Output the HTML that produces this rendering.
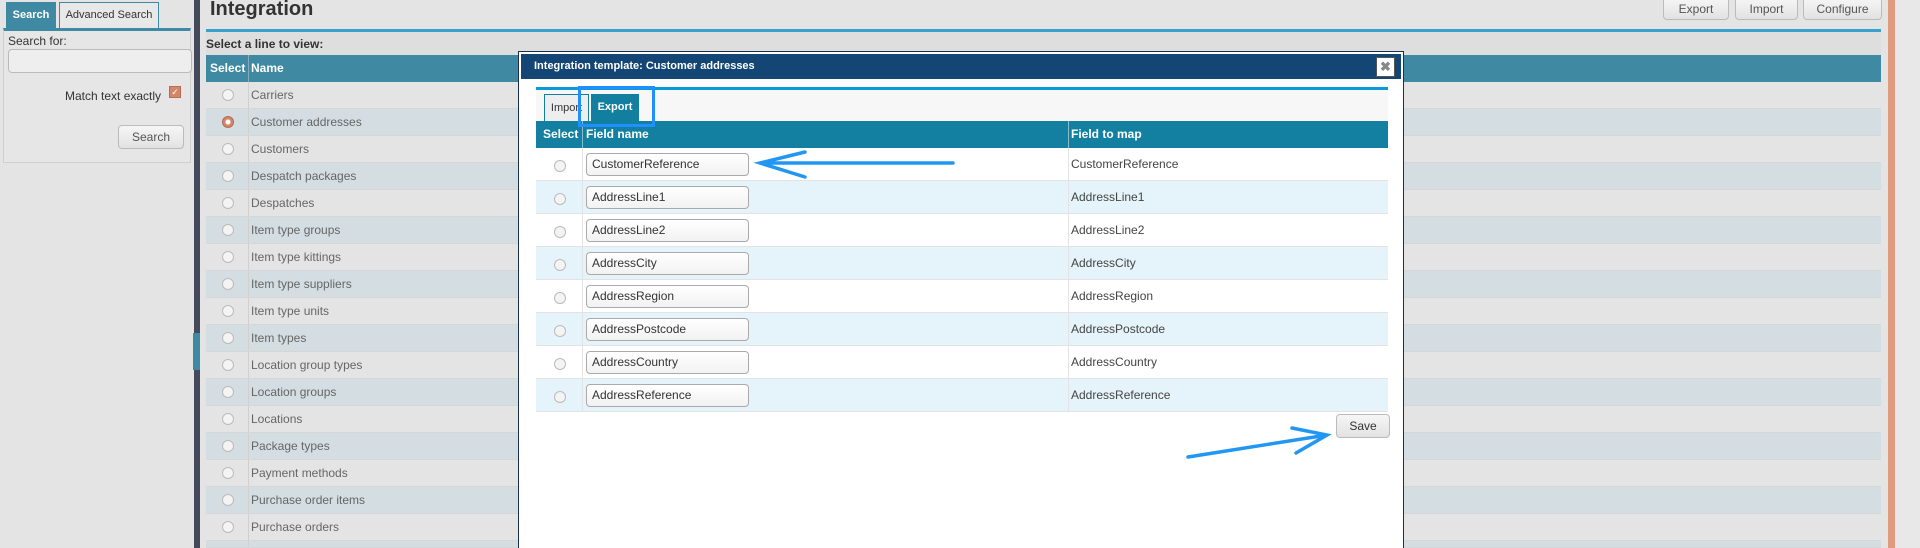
<!DOCTYPE html>
<html style="overflow:hidden;height:548px"><head><meta charset="utf-8"><style>
*{box-sizing:border-box;margin:0;padding:0}
body{width:1920px;height:548px;overflow:hidden;background:#e4e4e4;font-family:"Liberation Sans",sans-serif;font-size:12px;color:#555;position:relative}
.a{position:absolute}
.btn{position:absolute;border:1px solid #bbb;border-radius:4px;background:linear-gradient(#f6f6f6,#e2e2e2);color:#555;font-size:12px;text-align:center}
.radio{position:absolute;width:12px;height:12px;border:1px solid #bbb;border-radius:50%;background:#f4f4f4}
</style></head><body>
<div class="a" style="left:6px;top:2px;width:50px;height:27px;background:#3f8aa2;color:#fff;font-weight:bold;font-size:11px;line-height:27px;text-align:center">Search</div>
<div class="a" style="left:59px;top:2px;width:100px;height:27px;background:#e8e8e8;border:1px solid #3f8aa2;border-bottom:none;color:#333;font-size:11px;line-height:25px;text-align:center">Advanced Search</div>
<div class="a" style="left:3px;top:28px;width:188px;height:135px;border:1px solid #d0d0d0;border-top:3px solid #3f8aa2;background:#e6e6e6"></div>
<div class="a" style="left:8px;top:34px;color:#333;font-size:12px">Search for:</div>
<div class="a" style="left:8px;top:49px;width:184px;height:24px;border:1px solid #bbb;border-radius:4px;background:#eee"></div>
<div class="a" style="left:65px;top:89px;color:#333;font-size:12px">Match text exactly</div>
<div class="a" style="left:169px;top:86px;width:12px;height:12px;background:#d0876a;border:1px solid #b86c52;color:#fff;font-size:9px;line-height:10px;text-align:center">✓</div>
<div class="btn" style="left:118px;top:125px;width:66px;height:24px;line-height:22px">Search</div>
<div class="a" style="left:194px;top:0;width:6px;height:548px;background:#444a5c"></div>
<div class="a" style="left:193px;top:333px;width:7px;height:37px;background:#3f8aa2"></div>
<div class="a" style="left:210px;top:-2px;font-size:20px;font-weight:bold;color:#333">Integration</div>
<div class="btn" style="left:1663px;top:-3px;width:66px;height:23px;line-height:22px">Export</div>
<div class="btn" style="left:1735px;top:-3px;width:63px;height:23px;line-height:22px">Import</div>
<div class="btn" style="left:1803px;top:-3px;width:79px;height:23px;line-height:22px">Configure</div>
<div class="a" style="left:206px;top:29px;width:1675px;height:3px;background:#3aa0cc"></div>
<div class="a" style="left:206px;top:32px;width:1675px;height:23px;background:#dedede"></div>
<div class="a" style="left:206px;top:37px;font-weight:bold;color:#333;font-size:12px">Select a line to view:</div>
<div class="a" style="left:206px;top:55px;width:1675px;height:27px;background:#3f8aa2;color:#fff;font-weight:bold;line-height:27px"><span style="position:absolute;left:4px">Select</span><span style="position:absolute;left:42px;top:0;width:1px;height:27px;background:#8ab"></span><span style="position:absolute;left:45px">Name</span></div>
<div id="rows"></div>
<div class="a" style="left:1888px;top:0;width:7px;height:548px;background:#e09a7e"></div>
<div class="a" style="left:1895px;top:0;width:25px;height:548px;background:#e8e8e8"></div>
<div class="a" style="left:518px;top:51px;width:886px;height:497px;background:#fff;border:1px solid #1a2e4e;border-bottom:none"></div>
<div class="a" style="left:521px;top:54px;width:880px;height:25px;background:#134675;color:#fff;font-weight:bold;font-size:11px;line-height:25px;padding-left:13px">Integration template: Customer addresses</div>
<div class="a" style="left:1376px;top:57px;width:19px;height:20px;background:#fff;border:1px solid #555;color:#888;font-weight:bold;font-size:13px;line-height:18px;text-align:center">✖</div>
<div class="a" style="left:536px;top:87px;width:852px;height:3px;background:#0a9ad8"></div>
<div class="a" style="left:536px;top:90px;width:852px;height:31px;background:#f7f7f7"></div>
<div class="a" style="left:544px;top:94px;width:45px;height:27px;background:#eee;border:1px solid #137fa0;border-bottom:none;color:#333;font-size:11px;line-height:26px;text-align:center">Import</div>
<div class="a" style="left:591px;top:94px;width:48px;height:27px;background:#137fa0;color:#fff;font-weight:bold;font-size:11px;line-height:26px;text-align:center">Export</div>
<div class="a" style="left:536px;top:121px;width:852px;height:27px;background:#1380a1;color:#fff;font-weight:bold;line-height:27px"><span style="position:absolute;left:7px">Select</span><span style="position:absolute;left:46px;top:0;width:1px;height:27px;background:#8bc"></span><span style="position:absolute;left:50px">Field name</span><span style="position:absolute;left:532px;top:0;width:1px;height:27px;background:#8bc"></span><span style="position:absolute;left:535px">Field to map</span></div>
<div id="mrows"></div>
<div class="a" style="left:578px;top:86px;width:77px;height:41px;border:3px solid #1e90ff"></div>
<div class="btn" style="left:1336px;top:414px;width:54px;height:24px;line-height:22px;color:#333">Save</div>
<svg class="a" style="left:0;top:0" width="1920" height="548"><g stroke="#2196f3" stroke-width="3.5" stroke-linecap="round" fill="none"><path d="M953 163 L760 163 M805 152 L760 163 L805 177"/><path d="M1188 457 L1327 435 M1292 428 L1327 435 L1296 453"/></g></svg>
<script>
var n=["Carriers","Customer addresses","Customers","Despatch packages","Despatches","Item type groups","Item type kittings","Item type suppliers","Item type units","Item types","Location group types","Location groups","Locations","Package types","Payment methods","Purchase order items","Purchase orders",""];
var h="";n.forEach(function(t,i){var y=82+i*27;var hh=Math.min(27,548-y);h+='<div class="a" style="left:206px;top:'+y+'px;width:1675px;height:'+hh+'px;overflow:hidden;background:'+(i%2?'#d3dde2':'#e4e4e4')+';border-bottom:1px solid #d6d6d6"><span class="radio" style="left:16px;top:7px;'+(i==1?'background:radial-gradient(#fff 0 2px,#d0876a 3px);border-color:#b86c52':'')+'"></span><span style="position:absolute;left:42px;top:0;width:1px;height:27px;background:#d0d0d0"></span><span style="position:absolute;left:45px;line-height:27px;color:#666">'+t+'</span></div>'});
document.getElementById("rows").innerHTML=h;
var m=["CustomerReference","AddressLine1","AddressLine2","AddressCity","AddressRegion","AddressPostcode","AddressCountry","AddressReference"];
h="";m.forEach(function(t,i){var y=148+i*33;h+='<div class="a" style="left:536px;top:'+y+'px;width:852px;height:33px;background:'+(i%2?'#e5f3fa':'#fff')+';border-bottom:1px solid #e3e3e3"><span class="radio" style="left:18px;top:12px"></span><span style="position:absolute;left:46px;top:0;width:1px;height:33px;background:#e3e3e3"></span><span style="position:absolute;left:50px;top:5px;width:163px;height:23px;border:1px solid #aaa;border-radius:4px;background:linear-gradient(#fff,#f2f2f2);padding-left:5px;line-height:21px;color:#333">'+t+'</span><span style="position:absolute;left:532px;top:0;width:1px;height:33px;background:#e3e3e3"></span><span style="position:absolute;left:535px;line-height:33px;color:#444">'+t+'</span></div>'});
document.getElementById("mrows").innerHTML=h;
</script>
</body></html>
